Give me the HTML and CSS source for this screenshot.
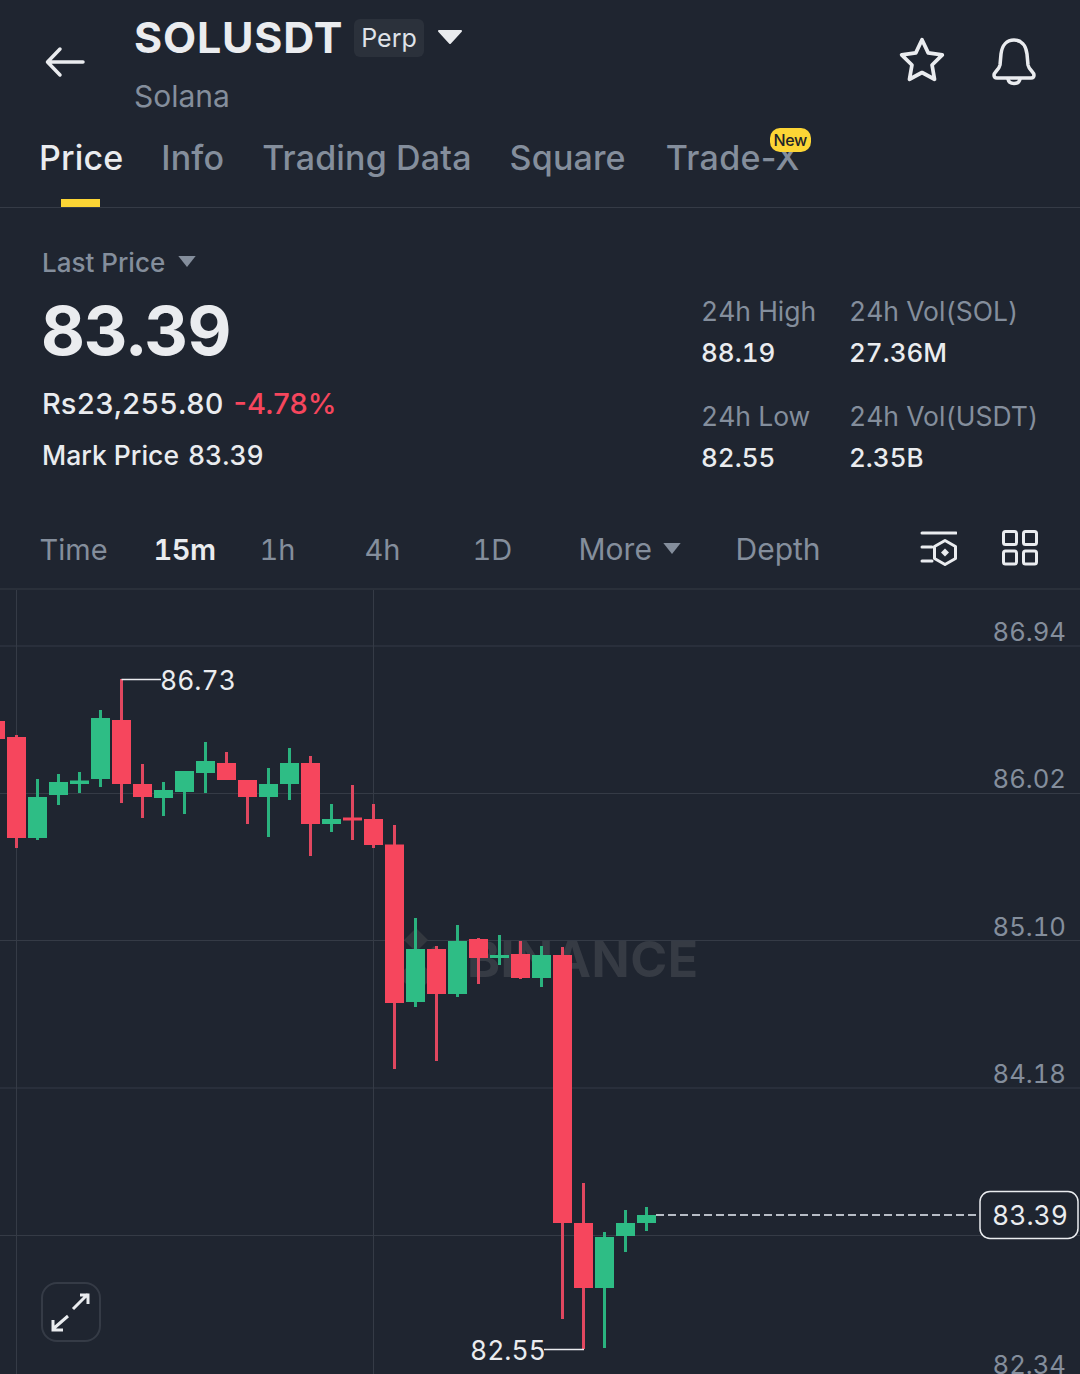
FILE: index.html
```html
<!DOCTYPE html>
<html lang="en">
<head>
    <meta charset="UTF-8">
    <meta name="viewport" content="width=device-width, initial-scale=1.0">
    <title>SOLUSDT Perp</title>
    <link rel="stylesheet" href="styles.css">
</head>
<body>
    <header class="top-bar">
        <svg class="back-icon" width="40" height="32" viewBox="0 0 40 32">
            <path d="M38 16H3M15 3L2.500 16L15 29"/>
        </svg>
        <div class="symbol">
            <div class="symbol-row">
                <h1>SOLUSDT</h1>
                <span class="perp-tag">Perp</span>
                <svg class="symbol-caret" width="26" height="16" viewBox="0 0 26 16">
                    <path d="M2 2H24L13 14Z"/>
                </svg>
            </div>
            <p class="symbol-name">Solana</p>
        </div>
        <div class="top-actions">
            <svg class="line-icon" width="46" height="46" viewBox="1.500 1.500 43 43">
                <path d="M23 4L28.800 16.300L42 18.200L32.400 27.700L34.700 41L23 34.700L11.300 41L13.600 27.700L4 18.200L17.200 16.300Z"/>
            </svg>
            <svg class="line-icon" width="46" height="50" viewBox="0 0 46 50">
                <path d="M3 38C3 35 8 33 9 28L10 17C11 8 16 3 23 3C30 3 35 8 36 17L37 28C38 33 43 35 43 38C43 40 42 41 40 41H6C4 41 3 40 3 38Z"/>
                <path d="M17 42C18 48 28 48 29 42"/>
            </svg>
        </div>
    </header>

    <nav class="tabs">
        <a class="tab active" href="#">Price</a>
        <a class="tab" href="#">Info</a>
        <a class="tab" href="#">Trading Data</a>
        <a class="tab" href="#">Square</a>
        <a class="tab" href="#">Trade-X<span class="new-badge">New</span></a>
    </nav>

    <section class="stats">
        <div class="price-block">
            <div class="last-label">Last Price
                <svg class="small-caret" width="20" height="13" viewBox="0 0 18 12"><path d="M1 1H17L9 11Z"/></svg>
            </div>
            <div class="last-price">83.39</div>
            <div class="fiat-row"><span>Rs23,255.80</span><span class="change">-4.78%</span></div>
            <div class="mark-row"><span>Mark Price</span><span>83.39</span></div>
        </div>
        <div class="day-stats">
            <div class="stat"><span class="stat-label">24h High</span><span class="stat-value">88.19</span></div>
            <div class="stat"><span class="stat-label">24h Vol(SOL)</span><span class="stat-value">27.36M</span></div>
            <div class="stat"><span class="stat-label">24h Low</span><span class="stat-value">82.55</span></div>
            <div class="stat"><span class="stat-label">24h Vol(USDT)</span><span class="stat-value">2.35B</span></div>
        </div>
    </section>

    <div class="toolbar">
        <span>Time</span>
        <span class="current">15m</span>
        <span>1h</span>
        <span>4h</span>
        <span>1D</span>
        <span class="more wide">More
            <svg class="small-caret" width="20" height="13" viewBox="0 0 18 12"><path d="M1 1H17L9 11Z"/></svg>
        </span>
        <span class="wide">Depth</span>
        <div class="toolbar-icons">
            <svg class="tool-icon" width="38" height="36" viewBox="0 0 38 36">
                <path d="M3 3H37M3 17H13M3 31H13"/>
                <path d="M26 10.500L36.500 16.500V28.500L26 34.500L15.500 28.500V16.500Z"/>
                <path class="fill-icon" d="M26 18.500L30 22.500L26 26.500L22 22.500Z"/>
            </svg>
            <svg class="tool-icon" width="36" height="36" viewBox="0 0 36 36">
                <rect x="1.500" y="1.500" width="13" height="13" rx="2"/>
                <rect x="21.500" y="1.500" width="13" height="13" rx="2"/>
                <rect x="1.500" y="21" width="13" height="13" rx="2"/>
                <rect x="21.500" y="21" width="13" height="13" rx="2"/>
            </svg>
        </div>
    </div>

    <section class="chart">
        <svg class="chart-svg" width="1080" height="784" viewBox="0 590 1080 784">
            <g class="grid">
                <path d="M0 646H1080M0 793.500H1080M0 940.500H1080M0 1088H1080M0 1235.500H1080"/>
                <path d="M16.500 590V1374M373.500 590V1374"/>
            </g>

            <g class="watermark">
                <path d="M416 928L428 940L416 952L404 940ZM398 946L404 952L398 958L392 952ZM434 946L440 952L434 958L428 952ZM416 958L434 976L416 994L398 976Z"/>
                <text x="467" y="977">BINANCE</text>
            </g>

            <g class="price-axis">
                <text x="1066" y="641">86.94</text>
                <text x="1066" y="788">86.02</text>
                <text x="1066" y="936">85.10</text>
                <text x="1066" y="1083">84.18</text>
                <text x="1066" y="1374">82.34</text>
            </g>

            <g class="candles down">
                <path d="M-4.500 715V745"/><rect x="-14" y="721" width="19" height="18"/>
                <path d="M16.500 735V848"/><rect x="7" y="737" width="19" height="101"/>
                <path d="M121.500 679V803"/><rect x="112" y="720" width="19" height="64"/>
                <path d="M142.500 764V818"/><rect x="133" y="784" width="19" height="13"/>
                <path d="M226.500 752V780"/><rect x="217" y="763" width="19" height="17"/>
                <path d="M247.500 780V824"/><rect x="238" y="780" width="19" height="17"/>
                <path d="M310.500 756V856"/><rect x="301" y="763" width="19" height="61"/>
                <path d="M352.500 785V840"/><rect x="343" y="817.500" width="19" height="3"/>
                <path d="M373.500 804V848"/><rect x="364" y="819" width="19" height="26"/>
                <path d="M394.500 825V1069"/><rect x="385" y="844.500" width="19" height="158.500"/>
                <path d="M436.500 946V1061"/><rect x="427" y="949" width="19" height="45"/>
                <path d="M478.500 938V984"/><rect x="469" y="939" width="19" height="19"/>
                <path d="M520.500 941V979"/><rect x="511" y="954" width="19" height="24"/>
                <path d="M562.500 947V1319"/><rect x="553" y="955" width="19" height="268"/>
                <path d="M583.500 1183V1349"/><rect x="574" y="1223" width="19" height="65"/>
            </g>
            <g class="candles up">
                <path d="M37.500 779V840"/><rect x="28" y="797" width="19" height="41"/>
                <path d="M58.500 774V805"/><rect x="49" y="782" width="19" height="13"/>
                <path d="M79.500 772V793"/><rect x="70" y="780.500" width="19" height="3.500"/>
                <path d="M100.500 710V787"/><rect x="91" y="718" width="19" height="61"/>
                <path d="M163.500 782V816"/><rect x="154" y="790" width="19" height="8"/>
                <path d="M184.500 771V814"/><rect x="175" y="771" width="19" height="21"/>
                <path d="M205.500 742V793"/><rect x="196" y="761" width="19" height="12"/>
                <path d="M268.500 768V837"/><rect x="259" y="784" width="19" height="13"/>
                <path d="M289.500 748V800"/><rect x="280" y="763" width="19" height="21"/>
                <path d="M331.500 804V832"/><rect x="322" y="819" width="19" height="5"/>
                <path d="M415.500 918V1007"/><rect x="406" y="949" width="19" height="53"/>
                <path d="M457.500 925V997"/><rect x="448" y="941" width="19" height="53"/>
                <path d="M499.500 935V965"/><rect x="490" y="955" width="19" height="3"/>
                <path d="M541.500 946V987"/><rect x="532" y="955" width="19" height="23"/>
                <path d="M604.500 1232V1348"/><rect x="595" y="1237" width="19" height="51"/>
                <path d="M625.500 1210V1252"/><rect x="616" y="1223" width="19" height="13"/>
                <path d="M646.500 1207V1231"/><rect x="637" y="1215" width="19" height="8"/>
            </g>

            <path class="last-line" d="M656 1215H978"/>
            <g class="extreme">
                <path d="M121.500 679.500H161M544 1349.500H584"/>
                <text x="160" y="690">86.73</text>
                <text x="470" y="1360">82.55</text>
            </g>

            <rect class="last-box" x="980" y="1191.500" width="98" height="47" rx="10"/>
            <text class="last-text" x="1030" y="1225">83.39</text>
        </svg>

        <button class="expand-btn">
            <svg width="40" height="40" viewBox="0 0 40 40">
                <path d="M22 17L37 2M29 3H37V12M17 24L2 37M2 28V38H12"/>
            </svg>
        </button>
    </section>
</body>
</html>
```

FILE: styles.css
```css
* {
    box-sizing: border-box;
}

html,
body {
    margin: 0;
    padding: 0;
    height: 1374px;
    overflow: hidden;
}

body {
    background: #1f2530;
    color: #eaecef;
    font-family: 'Inter', 'Liberation Sans', sans-serif;
    font-variant-numeric: tabular-nums;
}

h1,
p {
    margin: 0;
}

/* Top bar */
.top-bar {
    display: flex;
    align-items: flex-start;
    height: 126px;
    padding: 0 43px 0 45px;
}

.back-icon {
    margin-top: 46px;
    margin-right: 49px;
    fill: none;
    stroke: #eaecef;
    stroke-width: 3.500;
    stroke-linecap: round;
    stroke-linejoin: round;
}

.symbol {
    flex: 1;
    padding-top: 18px;
}

.symbol-row {
    display: flex;
    align-items: center;
    height: 39px;
}

.symbol-row h1 {
    font-size: 43px;
    font-weight: 700;
    line-height: 39px;
    letter-spacing: 0.8px;
    color: #eaecef;
}

.perp-tag {
    margin-left: 11px;
    padding: 0 7px;
    height: 38px;
    line-height: 38px;
    border-radius: 6px;
    background: #2b313b;
    font-size: 25px;
    color: #dfe2e8;
}

.symbol-caret {
    margin-left: 13px;
    fill: #eaecef;
    stroke: #eaecef;
    stroke-width: 2;
    stroke-linejoin: round;
    margin-top: -2px;
}

.symbol-name {
    margin-top: 20px;
    font-size: 30px;
    line-height: 38px;
    color: #848e9c;
}

.top-actions {
    display: flex;
    gap: 46px;
    padding-top: 37px;
}

.line-icon {
    fill: none;
    stroke: #eaecef;
    stroke-width: 3.500;
    stroke-linecap: round;
    stroke-linejoin: round;
}

/* Tabs */
.tabs {
    display: flex;
    gap: 38px;
    height: 82px;
    padding: 10px 0 0 39px;
    border-bottom: 1px solid #353b46;
    font-variant-numeric: normal;
}

.tab {
    position: relative;
    height: 44px;
    font-size: 34px;
    font-weight: 500;
    line-height: 44px;
    letter-spacing: 0.15px;
    color: #848e9c;
    text-decoration: none;
}

.tab:last-child {
    margin-left: 2px;
    letter-spacing: 0.3px;
}

.tab.active {
    color: #eaecef;
}

.tab.active::after {
    content: '';
    position: absolute;
    left: 22px;
    top: 63px;
    width: 39px;
    height: 8px;
    background: #fcd535;
}

.new-badge {
    position: absolute;
    top: -8px;
    right: -11px;
    width: 41px;
    height: 24px;
    border-radius: 10px;
    background: #fcd535;
    color: #1e2329;
    font-size: 16px;
    font-weight: 500;
    line-height: 24px;
    letter-spacing: -0.3px;
    text-align: center;
}

/* Price stats */
.stats {
    display: flex;
    justify-content: space-between;
    height: 299px;
    padding: 36px 0 0 42px;
}

.last-label {
    font-size: 26px;
    line-height: 38px;
    font-weight: 500;
    color: #848e9c;
}

.small-caret {
    fill: #848e9c;
    margin-left: 5px;
    vertical-align: 4px;
}

.last-price {
    margin-top: 13px;
    margin-left: -1px;
    font-size: 68px;
    font-weight: 700;
    line-height: 70px;
    letter-spacing: -0.900px;
}

.fiat-row {
    display: flex;
    gap: 10px;
    margin-top: 21px;
    font-size: 29px;
    font-weight: 500;
    line-height: 36px;
}

.change {
    color: #f6465d;
    font-variant-numeric: normal;
}

.mark-row {
    display: flex;
    gap: 9px;
    margin-top: 15px;
    font-size: 26.500px;
    font-weight: 500;
    line-height: 36px;
}

.day-stats {
    display: grid;
    grid-template-columns: 148px 231px;
    grid-auto-rows: 105px;
    padding-top: 49px;
}

.stat {
    display: flex;
    flex-direction: column;
    gap: 6px;
}

.stat-label {
    font-size: 26.500px;
    line-height: 36px;
    color: #848e9c;
}

.stat-value {
    font-size: 26px;
    font-weight: 500;
    line-height: 36px;
}

/* Interval toolbar */
.toolbar {
    display: grid;
    grid-template-columns: 114px 106px 105px 108px 106px 157px 1fr auto;
    align-items: center;
    height: 83px;
    padding: 3px 42px 0 39.500px;
    border-bottom: 2px solid #2a303a;
    font-size: 29px;
    font-weight: 400;
    color: #848e9c;
}

.toolbar .wide {
    font-size: 30px;
}

.toolbar .current {
    font-weight: 600;
    letter-spacing: -0.500px;
    color: #eaecef;
}

.more .small-caret {
    margin-left: 2px;
    vertical-align: 5px;
}

.toolbar-icons {
    display: flex;
    gap: 45px;
    align-items: center;
    margin-top: -2px;
}

.tool-icon {
    fill: none;
    stroke: #eaecef;
    stroke-width: 3;
    stroke-linecap: round;
    stroke-linejoin: round;
}

.tool-icon .fill-icon {
    fill: #eaecef;
    stroke: none;
}

/* Chart */
.chart {
    position: relative;
    height: 784px;
    overflow: hidden;
}

.chart-svg {
    display: block;
}

.grid path {
    fill: none;
    stroke: #353b46;
    stroke-width: 1;
}

.watermark path {
    fill: #33383f;
}

.watermark text {
    font-size: 50px;
    font-weight: 700;
    letter-spacing: 0.5px;
    fill: #363b44;
}

.price-axis text {
    font-size: 25.700px;
    text-anchor: end;
    fill: #848e9c;
}

.candles path {
    fill: none;
    stroke-width: 3;
}

.candles.down path {
    stroke: #e0475f;
}

.candles.down rect {
    fill: #f6465d;
}

.candles.up path {
    stroke: #2ab27e;
}

.candles.up rect {
    fill: #2ebd85;
}

.last-line {
    stroke: #b7bdc6;
    stroke-width: 2;
    stroke-dasharray: 8 4;
}

.extreme path {
    fill: none;
    stroke: #eaecef;
    stroke-width: 1.500;
}

.extreme text,
.last-text {
    font-size: 26.500px;
    fill: #eaecef;
}

.last-box {
    fill: #1f2530;
    stroke: #eaecef;
    stroke-width: 1.500;
}

.last-text {
    text-anchor: middle;
}

.expand-btn {
    position: absolute;
    left: 41px;
    top: 692px;
    width: 60px;
    height: 60px;
    padding: 0;
    display: flex;
    align-items: center;
    justify-content: center;
    border: 2.500px solid #353b46;
    border-radius: 16px;
    background: #1f2530;
}

.expand-btn svg {
    fill: none;
    stroke: #eaecef;
    stroke-width: 3;
}
```
